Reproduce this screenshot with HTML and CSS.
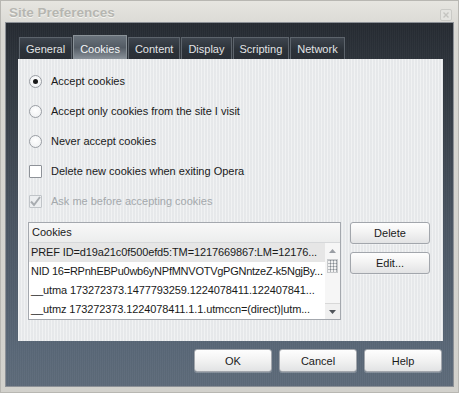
FILE: index.html
```html
<!DOCTYPE html>
<html>
<head>
<meta charset="utf-8">
<link rel="stylesheet" href="styles.css">
</head>
<body>
<div class="window">
  <div class="titlebar">
    <span class="title">Site Preferences</span>
    <span class="close"><svg width="10" height="10" viewBox="0 0 10 10"><path d="M2.5 2.5l5 5M7.5 2.5l-5 5" stroke="#c4c4c0" stroke-width="1.4"/></svg></span>
  </div>
  <div class="frame">
    <div class="tabs">
      <div class="tab">General</div>
      <div class="tab active">Cookies</div>
      <div class="tab">Content</div>
      <div class="tab">Display</div>
      <div class="tab">Scripting</div>
      <div class="tab">Network</div>
    </div>
    <div class="panel">
      <div class="opt"><span class="radio checked"></span>Accept cookies</div>
      <div class="opt"><span class="radio"></span>Accept only cookies from the site I visit</div>
      <div class="opt"><span class="radio"></span>Never accept cookies</div>
      <div class="opt"><span class="check"></span>Delete new cookies when exiting Opera</div>
      <div class="opt disabled"><span class="check tick"><svg width="13" height="13" viewBox="0 0 13 13"><path d="M2 6.5l3 3.5 6-8" fill="none" stroke="#a8acb0" stroke-width="2"/></svg></span>Ask me before accepting cookies</div>
      <div class="listarea">
        <div class="list">
          <div class="listbody">
            <div class="lhead">Cookies</div>
            <div class="row sel">PREF ID=d19a21c0f500efd5:TM=1217669867:LM=12176...</div>
            <div class="row tight">NID 16=RPnhEBPu0wb6yNPfMNVOTVgPGNntzeZ-k5NgjBy...</div>
            <div class="row">__utma 173272373.1477793259.1224078411.122407841...</div>
            <div class="row">__utmz 173272373.1224078411.1.1.utmccn=(direct)|utm...</div>
            <div class="row cut">__utmc 173272373.1224078418.33.2.utmccn=www.de.at</div>
          </div>
          <div class="scroll">
            <div class="sbtop"></div>
            <div class="sbup"><svg width="7" height="4" viewBox="0 0 7 4"><path d="M0 4L3.5 0 7 4z" fill="#9a9ea4"/></svg></div>
            <div class="thumb"></div>
            <div class="sbtrack"></div>
            <div class="sbdown"><svg width="7" height="4" viewBox="0 0 7 4"><path d="M0 0L3.5 4 7 0z" fill="#50545a"/></svg></div>
          </div>
        </div>
        <div class="sidebtns">
          <button class="btn">Delete</button>
          <button class="btn">Edit...</button>
        </div>
      </div>
    </div>
    <div class="footer">
      <button class="btn wide">OK</button>
      <button class="btn wide">Cancel</button>
      <button class="btn wide">Help</button>
    </div>
  </div>
</div>
</body>
</html>
```
FILE: styles.css
```css
* { box-sizing: border-box; }
html, body { margin: 0; padding: 0; }
body {
  width: 459px;
  height: 393px;
  overflow: hidden;
  font-family: "Liberation Sans", Arial, sans-serif;
  font-size: 11px;
  background: #d6d5d0;
}
.window {
  width: 459px;
  height: 393px;
  background: linear-gradient(#e6e5e0, #d8d7d2 30px, #d2d1cc);
  border: 1px solid #b8b7b2;
  padding: 0 4px 5px 4px;
  display: flex;
  flex-direction: column;
}
.titlebar {
  height: 21px;
  display: flex;
  align-items: center;
  justify-content: space-between;
  padding: 0 2px 0 4px;
}
.title {
  font-family: "Liberation Sans", Arial, sans-serif;
  font-weight: bold;
  font-size: 13.5px;
  color: #b6b6b1;
  text-shadow: 0 1px 0 #f4f4f0;
  margin-top: 2px;
}
.close {
  width: 12px;
  height: 12px;
  border: 1px solid #cacac6;
  border-radius: 2px;
  display: flex;
  align-items: center;
  justify-content: center;
  background: #e4e4e0;
  margin-top: 6px;
}
.frame {
  flex: 1;
  border: 1px solid #8c9096;
  background:
    repeating-linear-gradient(90deg, rgba(255,255,255,0.025) 0 1px, rgba(0,0,0,0.025) 1px 2px),
    linear-gradient(#262b32, #313840 60px, #4a5562 200px, #5a6878 330px, #5e6b7a);
  padding: 14px 10px 0 12px;
  display: flex;
  flex-direction: column;
}
.tabs {
  display: flex;
  height: 22px;
  margin-left: 1px;
  align-items: flex-end;
}
.tab {
  height: 22px;
  padding: 0 6px;
  display: flex;
  align-items: center;
  color: #e2e4e6;
  font-size: 11px;
  background: linear-gradient(#3e454e, #2c3239 55%, #2a2f36);
  border: 1px solid #5d646c;
  border-bottom: none;
  margin-right: 1px;
}
.tab.active {
  height: 24px;
  padding-top: 2px;
  background: linear-gradient(#6a737c, #535b64 50%, #8a929a);
  border-color: #8a9298;
  color: #f4f6f8;
}
.panel {
  height: 282px;
  background:
    repeating-linear-gradient(90deg, rgba(255,255,255,0.35) 0 1px, rgba(0,0,0,0.012) 1px 3px),
    #e9ebed;
  padding: 7px 10px 0 10px;
  display: flex;
  flex-direction: column;
}
.opt {
  height: 30px;
  display: flex;
  align-items: center;
  color: #1a1a1a;
  font-size: 11px;
}
.opt.disabled { color: #a4a8ac; }
.radio {
  width: 13px;
  height: 13px;
  border-radius: 50%;
  border: 1px solid #9a9ea4;
  background: radial-gradient(circle at 50% 40%, #ffffff, #eceef0);
  margin-right: 9px;
  margin-left: 1px;
  display: flex;
  align-items: center;
  justify-content: center;
}
.radio.checked::after {
  content: "";
  width: 5px;
  height: 5px;
  border-radius: 50%;
  background: #1a1a1a;
}
.check {
  width: 13px;
  height: 13px;
  border: 1px solid #8e9298;
  background: #ffffff;
  margin-right: 9px;
  margin-left: 1px;
  border-radius: 1px;
}
.check.tick {
  border-color: #c0c4c8;
  background: #eceef0;
  position: relative;
}
.check.tick svg { position: absolute; left: -1px; top: -1px; }
.listarea {
  display: flex;
  margin-top: 6px;
}
.list {
  width: 313px;
  height: 98px;
  border: 1px solid #a4a8ae;
  background: #ffffff;
  display: flex;
  overflow: hidden;
}
.listbody {
  flex: 1;
  overflow: hidden;
  font-size: 11px;
  color: #1a1a1a;
}
.lhead {
  height: 20px;
  line-height: 19px;
  padding-left: 3px;
  background: linear-gradient(#f8f8f8, #eceded);
  border-bottom: 1px solid #d6d8da;
}
.row {
  height: 19px;
  line-height: 19px;
  padding-left: 2px;
  white-space: nowrap;
  overflow: hidden;
  letter-spacing: -0.12px;
}
.row.tight { letter-spacing: -0.25px; }
.row.sel { background: #e6e6e6; }
.row.cut { height: 19px; line-height: 13px; }
.scroll {
  width: 15px;
  display: flex;
  flex-direction: column;
  background: #f6f6f6;
}
.sbtop {
  height: 20px;
  background: linear-gradient(#f8f8f8, #eceded);
  border-bottom: 1px solid #d6d8da;
}
.sbup, .sbdown {
  height: 16px;
  display: flex;
  align-items: center;
  justify-content: center;
}
.sbdown { margin-top: auto; background: #f0f0f0; border-top: 1px solid #d8d8d8; }
.thumb {
  height: 14px;
  margin: 0 2px;
  border: 1px solid #c8cacc;
  background:
    repeating-linear-gradient(90deg, transparent 0 2px, #b8bcc0 2px 3px),
    repeating-linear-gradient(0deg, #f2f2f2 0 2px, #b8bcc0 2px 3px);
  background-blend-mode: multiply;
}
.sbtrack { flex: 1; }
.sidebtns {
  display: flex;
  flex-direction: column;
  gap: 8px;
  margin-left: 9px;
}
.btn {
  width: 80px;
  height: 22px;
  border: 1px solid #a2a6ac;
  border-radius: 3px;
  background: linear-gradient(#fefefe, #f2f2f2 50%, #e2e3e4);
  font-family: "Liberation Sans", Arial, sans-serif;
  font-size: 11px;
  color: #1a1a1a;
  padding: 0;
  box-shadow: 0 1px 0 rgba(255,255,255,0.25);
}
.btn.wide { width: 78px; height: 23px; }
.footer {
  display: flex;
  justify-content: flex-end;
  gap: 7px;
  padding-top: 8px;
  padding-right: 1px;
}
```
